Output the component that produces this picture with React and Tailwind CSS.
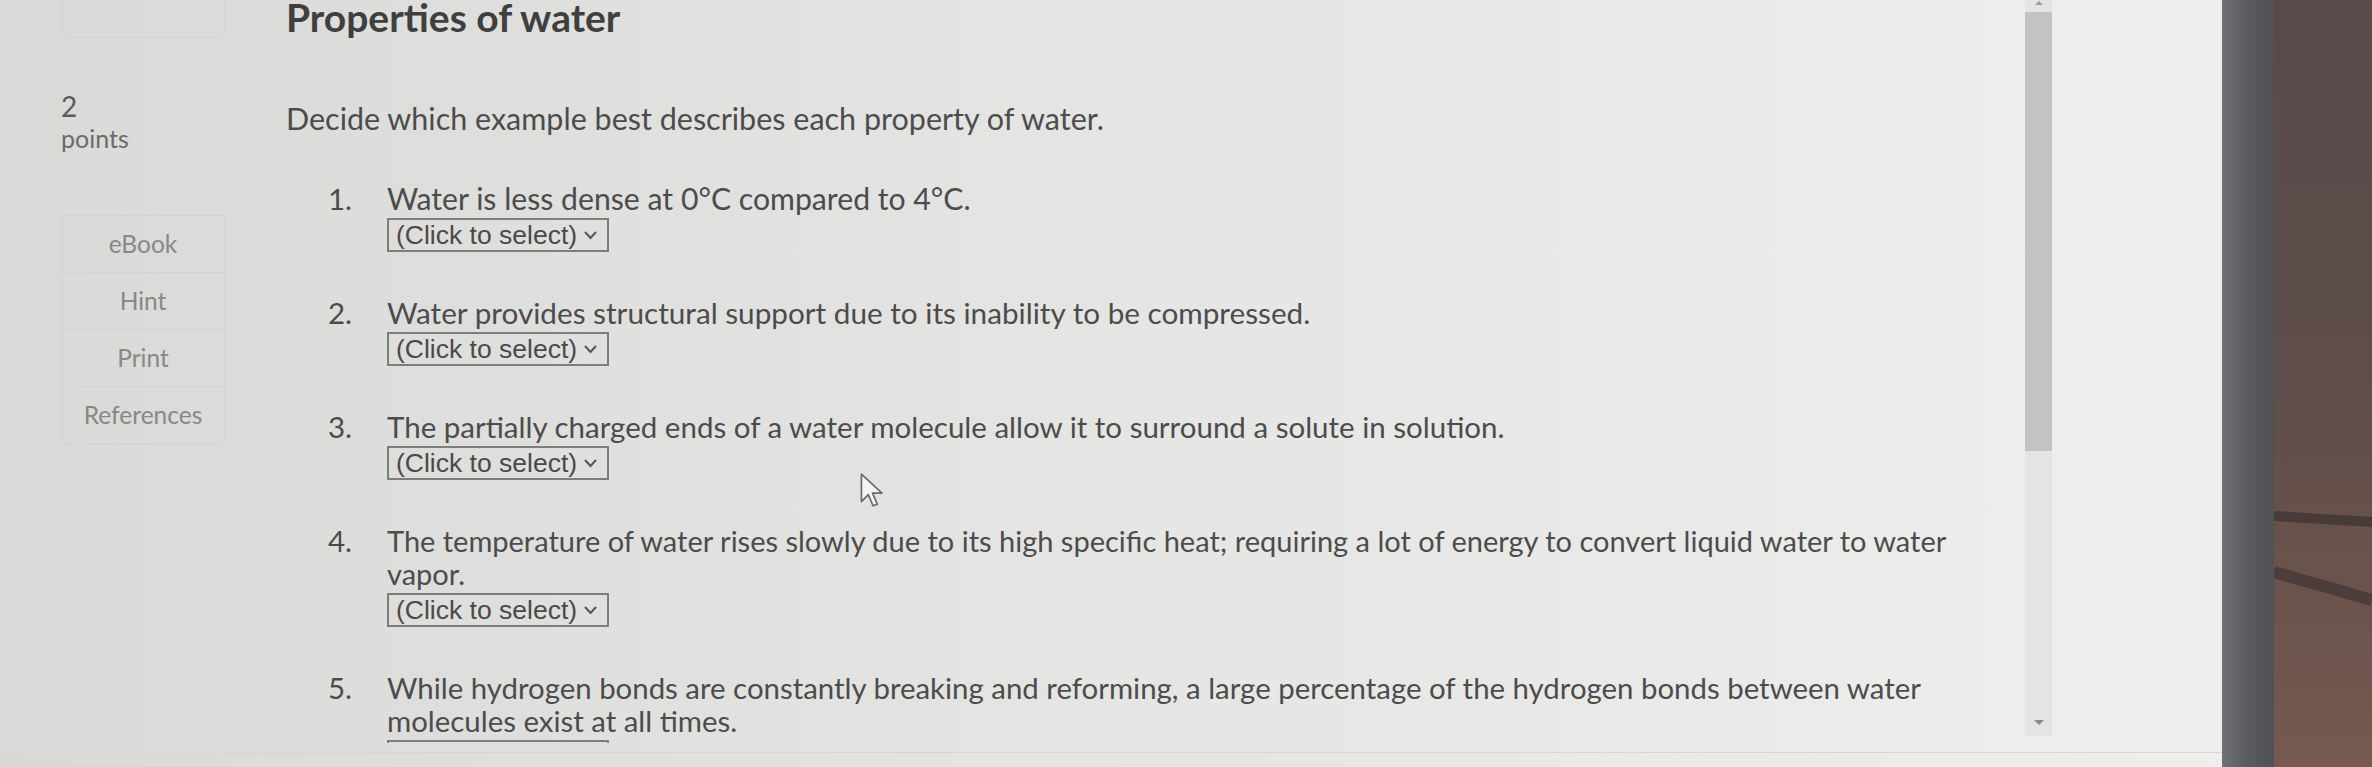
import React from "react";

const items = [
  { n: "1.", size: "text-[30.2px]", lines: ["Water is less dense at 0°C compared to 4°C."] },
  { n: "2.", size: "text-[29.7px]", lines: ["Water provides structural support due to its inability to be compressed."] },
  {
    n: "3.",
    size: "text-[29.5px]",
    lines: ["The partially charged ends of a water molecule allow it to surround a solute in solution."],
  },
  {
    n: "4.",
    size: "text-[29px]",
    lines: [
      "The temperature of water rises slowly due to its high specific heat; requiring a lot of energy to convert liquid water to water",
      "vapor.",
    ],
  },
  {
    n: "5.",
    size: "text-[29.4px]",
    cut: true,
    lines: [
      "While hydrogen bonds are constantly breaking and reforming, a large percentage of the hydrogen bonds between water",
      "molecules exist at all times.",
    ],
  },
];

const tabs = ["eBook", "Hint", "Print", "References"];

const SelectBox = ({ cut }) =>
  cut ? (
    // only the top edge of the last dropdown is in view
    <div className="mt-[3px] h-[34px] w-[222px] border-2 border-[#7d7d7b]" />
  ) : (
    <div className="mt-[3px] flex h-[34px] w-[222px] items-center justify-between border-2 border-[#7d7d7b] pl-[7px] pr-[9px] font-['Liberation_Sans',Arial,sans-serif] text-[26.5px] leading-none text-[#4a4a4a]">
      <span>(Click to select)</span>
      <svg width="15" height="10" viewBox="0 0 15 10">
        <polyline points="2,2 7.5,8 13,2" fill="none" stroke="#555" strokeWidth="2" />
      </svg>
    </div>
  );

const Cursor = () => (
  <svg
    className="absolute left-[859px] top-[472px]"
    width="27"
    height="38"
    viewBox="0 0 25 36"
  >
    <path
      d="M2 2 L2 28 L8.5 21.5 L13 32 L17 30.5 L12.5 20 L21.5 20 Z"
      fill="#f4f4f2"
      stroke="#6a6a6a"
      strokeWidth="1.6"
      strokeLinejoin="round"
    />
  </svg>
);

export default function App() {
  return (
    <div className="flex h-[767px] w-[2372px] overflow-hidden font-['Lato',sans-serif]">
      {/* screen */}
      <div className="relative w-[2222px] bg-gradient-to-r from-[#d9d9d7] via-[#e5e5e3] to-[#eeeeec]">
        <div className="h-[753px] border-b border-[#d6d6d4]">
          <div className="flex h-[743px] overflow-hidden">
            {/* left column */}
            <div className="w-[286px] shrink-0 pl-[61px]">
              <div className="h-[38px] w-[164px] rounded-b-[8px] border-x border-b border-[#d3d3d1]" />
              <div className="mt-[54px] text-[28px] leading-none text-[#5a5a5a]">2</div>
              <div className="mt-[6px] text-[25px] leading-none text-[#6a6a6a]">points</div>
              <div className="mt-[64px] w-[164px] overflow-hidden rounded-b-[8px] border border-[#d3d3d1]">
                {tabs.map((t, i) => (
                  <div
                    key={t}
                    className={`flex h-[57px] items-center justify-center text-[24.5px] text-[#888886] ${
                      i < tabs.length - 1 ? "border-b border-[#d3d3d1]" : ""
                    }`}
                  >
                    {t}
                  </div>
                ))}
              </div>
            </div>

            {/* content column */}
            <div className="flex-1">
              <h1 className="text-[39px] font-bold leading-[34px] text-[#3f3f3f]">
                Properties of water
              </h1>
              <p className="mt-[67px] text-[30.5px] leading-[34px] text-[#4c4c4c]">
                Decide which example best describes each property of water.
              </p>
              <ol className="mt-[47px]">
                {items.map((it) => (
                  <li key={it.n} className="mb-[44px] flex">
                    <span className="w-[101px] shrink-0 pr-[35px] text-right text-[29.5px] leading-[33px] text-[#4c4c4c]">
                      {it.n}
                    </span>
                    <div>
                      <div className={`${it.size} leading-[33px] text-[#4c4c4c]`}>
                        {it.lines.map((l, i) => (
                          <div key={i}>{l}</div>
                        ))}
                      </div>
                      <SelectBox cut={it.cut} />
                    </div>
                  </li>
                ))}
              </ol>
            </div>

            {/* scrollbar */}
            <div className="mr-[170px] flex h-[736px] w-[27px] shrink-0 flex-col bg-[#e4e4e2]">
              <div className="flex h-[12px] justify-center">
                <svg width="12" height="5" viewBox="0 0 12 5">
                  <polygon points="2,5 10,5 6,1" fill="#9a9a98" />
                </svg>
              </div>
              <div className="h-[439px] bg-[#c3c3c1]" />
              <div className="flex flex-1 items-end justify-center pb-[10px]">
                <svg width="12" height="6" viewBox="0 0 12 6">
                  <polygon points="1,0 11,0 6,5" fill="#8a8a88" />
                </svg>
              </div>
            </div>
          </div>
        </div>
        <Cursor />
      </div>

      {/* monitor bezel */}
      <div className="w-[52px] bg-gradient-to-r from-[#707175] via-[#5a5b5f] to-[#505155]" />

      {/* background behind monitor */}
      <div className="relative flex-1 bg-gradient-to-b from-[#574a49] via-[#5e4d4a] to-[#76594f]">
        <svg className="absolute inset-0" width="98" height="767" viewBox="0 0 98 767">
          <line x1="0" y1="516" x2="98" y2="522" stroke="#3c3130" strokeWidth="10" opacity="0.7" />
          <line x1="0" y1="572" x2="98" y2="600" stroke="#3e3231" strokeWidth="12" opacity="0.65" />
        </svg>
      </div>
    </div>
  );
}
